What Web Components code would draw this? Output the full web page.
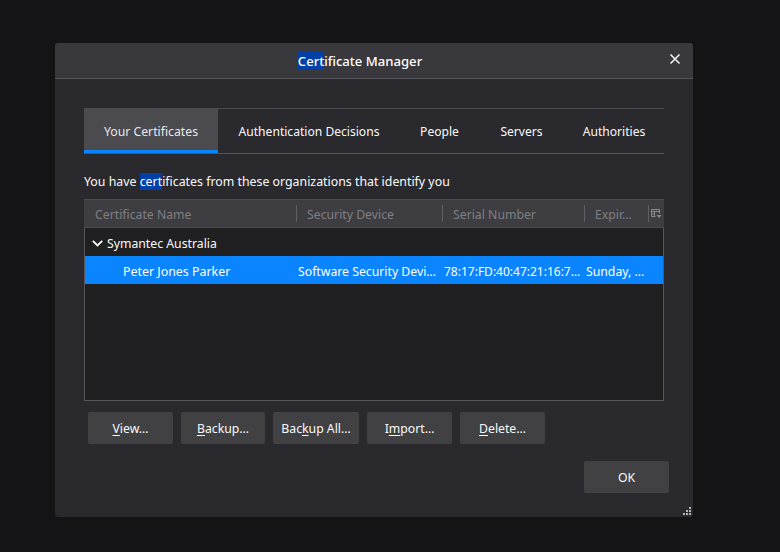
<!DOCTYPE html>
<html>
<head>
<meta charset="utf-8">
<title>Certificate Manager</title>
<style>
    html, body { margin: 0; height: 100%; background: #141416; }
    body { padding: 43px 0 0 55px; box-sizing: border-box; overflow: hidden; font: 12.25px "Noto Sans", "Open Sans", sans-serif; color: #f9f9fa; }
    mark { background: #0040a8; color: #fff; }
    u { text-underline-offset: 2px; }
</style>
</head>
<body>

<cert-dialog>
    <span slot="title"><mark>Cert</mark>ificate Manager</span>
    <cert-tabs>
        <cert-tab selected style="width:134px">Your Certificates</cert-tab>
        <cert-tab style="width:182px">Authentication Decisions</cert-tab>
        <cert-tab style="width:79px">People</cert-tab>
        <cert-tab style="width:85px">Servers</cert-tab>
        <cert-tab style="width:100px">Authorities</cert-tab>
    </cert-tabs>
    <p slot="intro">You have <mark>cert</mark>ificates from these organizations that identify you</p>
    <cert-tree slot="tree">
        <tree-group>Symantec Australia</tree-group>
        <tree-row selected>
            <span style="font-size:12.4px">Peter Jones Parker</span>
            <span>Software Security Devi…</span>
            <span style="font-size:12px">78:17:FD:40:47:21:16:7…</span>
            <span>Sunday, …</span>
        </tree-row>
    </cert-tree>
    <cert-button slot="actions"><u>V</u>iew…</cert-button>
    <cert-button slot="actions" style="width:84px"><u>B</u>ackup…</cert-button>
    <cert-button slot="actions" style="width:86px">Bac<u>k</u>up All…</cert-button>
    <cert-button slot="actions">I<u>m</u>port…</cert-button>
    <cert-button slot="actions"><u>D</u>elete…</cert-button>
    <cert-button slot="ok">OK</cert-button>
</cert-dialog>

<script>
const dialog_template = document.createElement('template');
dialog_template.innerHTML = `
<style>
    :host {
        display: flex;
        flex-direction: column;
        width: 638px;
        height: 474px;
        background: #2a2a2e;
        border-radius: 3px;
        box-sizing: border-box;
        overflow: hidden;
    }
    #head {
        flex: none;
        height: 36px;
        box-sizing: border-box;
        border-bottom: 1px solid #55555a;
        background: #38383d;
        display: flex;
        align-items: center;
        justify-content: center;
        position: relative;
        padding-right: 28px;
        font-size: 13.1px;
        font-weight: 500;
        color: #fff;
    }
    #close { position: absolute; right: 12px; top: 10px; width: 12px; height: 12px; }
    #body {
        flex: 1;
        display: flex;
        flex-direction: column;
        padding: 29px 29px 0 29px;
        position: relative;
    }
    #intro { margin: 19px 0 8px; }
    ::slotted(p) { margin: 0; line-height: 18px; height: 18px; white-space: nowrap; font-size: 12.35px; }
    #actions { display: flex; gap: 8px; margin: 11px 0 0 4px; }
    #footer { display: flex; justify-content: flex-end; margin: 17px -5px 0 0; }
    #grip { position: absolute; right: 0; bottom: 0; width: 11px; height: 11px; }
</style>
<div id="head">
    <slot name="title"></slot>
    <svg id="close" viewBox="0 0 12 12"><path d="M1.5 1.5l9 9M10.5 1.5l-9 9" stroke="#f0f0f2" stroke-width="1.6" fill="none"/></svg>
</div>
<div id="body">
    <slot></slot>
    <div id="intro"><slot name="intro"></slot></div>
    <slot name="tree"></slot>
    <div id="actions"><slot name="actions"></slot></div>
    <div id="footer"><slot name="ok"></slot></div>
    <svg id="grip" viewBox="0 0 11 11" fill="#b4b4b8">
        <rect x="7" y="1" width="2" height="2"/>
        <rect x="4" y="4" width="2" height="2"/><rect x="7" y="4" width="2" height="2"/>
        <rect x="1" y="7" width="2" height="2"/><rect x="4" y="7" width="2" height="2"/><rect x="7" y="7" width="2" height="2"/>
    </svg>
</div>
`;

class CertDialog extends HTMLElement {
    constructor() {
        super();
        this.attachShadow({ mode: 'open' });
        this.shadowRoot.appendChild(dialog_template.content.cloneNode(true));
    }
}

const tabs_template = document.createElement('template');
tabs_template.innerHTML = `
<style>
    :host {
        display: flex;
        height: 46px;
        box-sizing: border-box;
        border-top: 1px solid #4a4a4f;
        border-bottom: 1px solid #55555a;
    }
</style>
<slot></slot>
`;

class CertTabs extends HTMLElement {
    constructor() {
        super();
        this.attachShadow({ mode: 'open' });
        this.shadowRoot.appendChild(tabs_template.content.cloneNode(true));
    }
}

const tab_template = document.createElement('template');
tab_template.innerHTML = `
<style>
    :host {
        display: flex;
        align-items: center;
        justify-content: center;
        box-sizing: border-box;
        height: 44px;
        padding-top: 1px;
        white-space: nowrap;
        flex: none;
        font-size: 12.1px;
        color: #f9f9fa;
    }
    :host([selected]) {
        background: #4a4a4f;
        border-bottom: 3px solid #0a84ff;
        color: #e8e8ea;
        font-size: 12.25px;
        padding-top: 4px;
    }
</style>
<slot></slot>
`;

class CertTab extends HTMLElement {
    constructor() {
        super();
        this.attachShadow({ mode: 'open' });
        this.shadowRoot.appendChild(tab_template.content.cloneNode(true));
    }
}

const tree_template = document.createElement('template');
tree_template.innerHTML = `
<style>
    :host {
        display: block;
        height: 202px;
        box-sizing: border-box;
        border: 1px solid #55555a;
        border-top: none;
        border-radius: 2px 2px 0 0;
        background: #202023;
        flex: none;
    }
    #cols {
        display: grid;
        grid-template-columns: 212px 146px 142px 64px 16px;
        height: 29px;
        margin: 0 -1px;
        box-sizing: border-box;
        background: #3d3d42;
        border-top: 1px solid #4a4a4f;
        border-bottom: 1px solid #4a4a4f;
        color: #7f7f84;
        white-space: nowrap;
    }
    .col { display: flex; align-items: center; padding: 2px 0 0 11px; overflow: hidden; position: relative; }
    .col + .col::before {
        content: '';
        position: absolute;
        left: 0;
        top: 5px;
        height: 17px;
        width: 1px;
        background: #5f5f64;
    }
    .picker { padding: 0 0 0 3px; }
</style>
<div id="cols">
    <div class="col">Certificate Name</div>
    <div class="col">Security Device</div>
    <div class="col">Serial Number</div>
    <div class="col">Expir…</div>
    <div class="col picker">
        <svg width="11" height="11" viewBox="0 0 11 11" fill="none" stroke="#8a8a8f">
            <path d="M.5 1.5h8v4M.5 1.5v7h4M.5 3.5h8M3.5 3.5v5M.5 6h3"/>
            <path d="M5.5 7h5l-2.5 3z" fill="#8a8a8f" stroke="none"/>
        </svg>
    </div>
</div>
<slot></slot>
`;

class CertTree extends HTMLElement {
    constructor() {
        super();
        this.attachShadow({ mode: 'open' });
        this.shadowRoot.appendChild(tree_template.content.cloneNode(true));
    }
}

const group_template = document.createElement('template');
group_template.innerHTML = `
<style>
    :host { display: flex; align-items: center; box-sizing: border-box; height: 28px; padding: 2px 0 0 7px; gap: 4px; white-space: nowrap; }
    svg { flex: none; }
</style>
<svg width="11" height="11" viewBox="0 0 11 11"><path d="M.8 2.8l4.7 4.7 4.7-4.7" fill="none" stroke="#f9f9fa" stroke-width="1.9"/></svg>
<slot></slot>
`;

class TreeGroup extends HTMLElement {
    constructor() {
        super();
        this.attachShadow({ mode: 'open' });
        this.shadowRoot.appendChild(group_template.content.cloneNode(true));
    }
}

const row_template = document.createElement('template');
row_template.innerHTML = `
<style>
    :host {
        display: grid;
        grid-template-columns: 213px 146px 142px 1fr;
        align-items: center;
        box-sizing: border-box;
        height: 28px;
        padding-top: 2px;
        white-space: nowrap;
    }
    :host([selected]) { background: #0a84ff; color: #fff; }
    ::slotted(span:first-child) { padding-left: 38px; }
</style>
<slot></slot>
`;

class TreeRow extends HTMLElement {
    constructor() {
        super();
        this.attachShadow({ mode: 'open' });
        this.shadowRoot.appendChild(row_template.content.cloneNode(true));
    }
}

const button_template = document.createElement('template');
button_template.innerHTML = `
<style>
    :host {
        display: flex;
        align-items: center;
        justify-content: center;
        width: 85px;
        height: 32px;
        box-sizing: border-box;
        background: #414144;
        border-radius: 2px;
        white-space: nowrap;
        color: #f9f9fa;
    }
</style>
<slot></slot>
`;

class CertButton extends HTMLElement {
    constructor() {
        super();
        this.attachShadow({ mode: 'open' });
        this.shadowRoot.appendChild(button_template.content.cloneNode(true));
    }
}

customElements.define('cert-dialog', CertDialog);
customElements.define('cert-tabs', CertTabs);
customElements.define('cert-tab', CertTab);
customElements.define('cert-tree', CertTree);
customElements.define('tree-group', TreeGroup);
customElements.define('tree-row', TreeRow);
customElements.define('cert-button', CertButton);
</script>
</body>
</html>
